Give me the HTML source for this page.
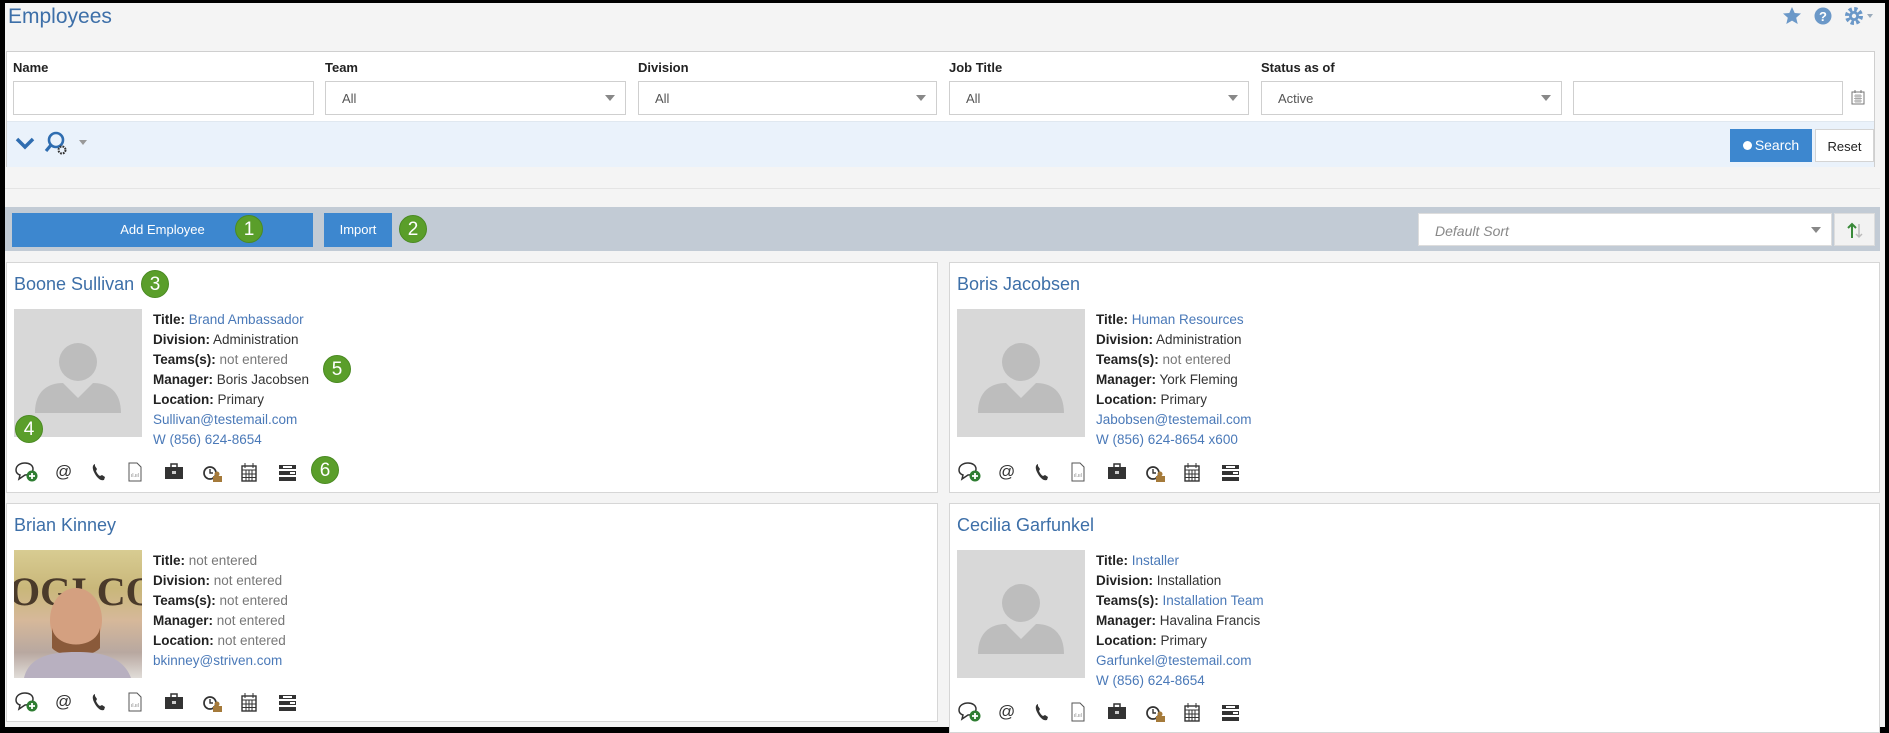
<!DOCTYPE html>
<html><head><meta charset="utf-8"><style>
*{box-sizing:border-box;margin:0;padding:0}
html,body{width:1889px;height:733px;overflow:hidden;background:#000}
#pg{position:absolute;left:5px;top:3px;width:1880px;height:724px;background:#f4f4f4;font-family:"Liberation Sans",sans-serif;color:#222}
.a{position:absolute}
.title{left:3px;top:2px;font-size:21px;color:#3d6fa8}
.fbox{left:1px;top:48px;width:1869px;height:116px;background:#fff;border:1px solid #cfcfcf}
.lbl{font-size:13px;font-weight:bold;color:#222;top:8px}
.inp{top:29px;height:34px;background:#fff;border:1px solid #cfcfcf;font-size:13px;color:#555;padding:9px 0 0 16px}
.inp .dd{position:absolute;right:10px;top:13px;border-left:5px solid transparent;border-right:5px solid transparent;border-top:6px solid #888}
.band{left:0;top:69px;width:1867px;height:46px;background:#eaf2fb;border-top:1px solid #e0e8f0}
.btn{background:#3d87cf;color:#fff;font-size:13px;text-align:center}
.badge{width:28px;height:28px;border-radius:50%;background:#5a9e2a;color:#fff;font-size:19px;text-align:center;line-height:28px;border:1px solid #4a8a22}
.card{background:#fff;border:1px solid #d6d6d6}
.nm{font-size:18px;color:#3d6fa8;left:7px;top:11px}
.ph{left:7px;top:46px;width:128px;height:128px;background:#d8d8d8;overflow:hidden}
.det{font-size:13.5px;line-height:20px;color:#333;left:146px;top:47px}
.det b{color:#222}
.bl{color:#4a79b8}
.gr{color:#777}
</style></head><body><div id="pg">
<div class="a title">Employees</div>
<svg class="a" style="left:1777px;top:3px" width="20" height="20" viewBox="0 0 20 20"><path d="M10 1l2.7 6 6.3.5-4.8 4.2 1.5 6.3L10 14.6 4.3 18l1.5-6.3L1 7.5 7.3 7z" fill="#6b98c8"/></svg>
<svg class="a" style="left:1809px;top:4px" width="18" height="18"><circle cx="9" cy="9" r="8.5" fill="#6b98c8"/><text x="9" y="14" font-size="13" font-weight="bold" fill="#fff" text-anchor="middle" font-family="Liberation Sans">?</text></svg>
<svg class="a" style="left:1839px;top:3px" width="20" height="20" viewBox="0 0 20 20"><circle cx="10" cy="10" r="6.5" fill="none" stroke="#6b98c8" stroke-width="5" stroke-dasharray="3 2.1"/><circle cx="10" cy="10" r="5" fill="#6b98c8"/><circle cx="10" cy="10" r="2.2" fill="#f4f4f4"/></svg>
<div class="a" style="left:1862px;top:11px;border-left:3px solid transparent;border-right:3px solid transparent;border-top:4px solid #9ab"></div>
<div class="a fbox">
 <div class="a lbl" style="left:6px">Name</div>
 <div class="a lbl" style="left:318px">Team</div>
 <div class="a lbl" style="left:631px">Division</div>
 <div class="a lbl" style="left:942px">Job Title</div>
 <div class="a lbl" style="left:1254px">Status as of</div>
 <div class="a inp" style="left:6px;width:301px"></div>
 <div class="a inp" style="left:318px;width:301px">All<span class="dd"></span></div>
 <div class="a inp" style="left:631px;width:299px">All<span class="dd"></span></div>
 <div class="a inp" style="left:942px;width:300px">All<span class="dd"></span></div>
 <div class="a inp" style="left:1254px;width:301px">Active<span class="dd"></span></div>
 <div class="a inp" style="left:1566px;width:270px"></div>
 <svg class="a" style="left:1844px;top:38px" width="14" height="15"><rect x="1" y="2" width="12" height="12" fill="none" stroke="#777"/><path d="M3 6h8M3 8.5h8M3 11h8M5 4v9M7 4v9M9 4v9" stroke="#999" stroke-width=".8"/><path d="M4 0v3M10 0v3" stroke="#777"/></svg>
 <div class="a band">
  <svg class="a" style="left:8px;top:14px" width="20" height="14"><path d="M2 3l8 8 8-8" fill="none" stroke="#2f6db0" stroke-width="3.5"/></svg>
  <svg class="a" style="left:37px;top:8px" width="26" height="28"><circle cx="12" cy="10" r="7" fill="none" stroke="#2f6db0" stroke-width="2.6"/><path d="M7 15l-5 6" stroke="#2f6db0" stroke-width="3.2"/><circle cx="18" cy="20" r="3.5" fill="none" stroke="#333" stroke-width="2" stroke-dasharray="1.8 1"/></svg>
  <div class="a" style="left:72px;top:18px;border-left:4px solid transparent;border-right:4px solid transparent;border-top:5px solid #999"></div>
  <div class="a btn" style="left:1723px;top:7px;width:82px;height:33px;line-height:33px;font-size:14px"><span style="display:inline-block;width:9px;height:9px;border-radius:50%;background:#fff;margin-right:3px"></span>Search</div>
  <div class="a" style="left:1808px;top:7px;width:59px;height:33px;line-height:33px;background:#fff;border:1px solid #d4d4d4;font-size:13px;text-align:center">Reset</div>
 </div>
</div>
<div class="a" style="left:0;top:185px;width:1875px;height:1px;background:#e4e4e4"></div>
<div class="a" style="left:0;top:204px;width:1875px;height:44px;background:#c2cbd5"></div>
<div class="a btn" style="left:7px;top:210px;width:301px;height:34px;line-height:34px">Add Employee</div>
<div class="a badge" style="left:230px;top:212px">1</div>
<div class="a btn" style="left:319px;top:210px;width:68px;height:34px;line-height:34px">Import</div>
<div class="a badge" style="left:394px;top:212px">2</div>
<div class="a" style="left:1413px;top:210px;width:414px;height:33px;background:#fff;border:1px solid #ddd;font-size:14px;font-style:italic;color:#888;padding:9px 0 0 16px">Default Sort<span class="a" style="right:10px;top:13px;border-left:5px solid transparent;border-right:5px solid transparent;border-top:6px solid #888"></span></div>
<div class="a" style="left:1829px;top:210px;width:41px;height:33px;background:#f2f2f2;border:1px solid #ddd">
 <svg class="a" style="left:11px;top:7px" width="18" height="18"><path d="M6 17V3M2 7l4-4 4 4" fill="none" stroke="#3a8a3a" stroke-width="2"/><path d="M13 3v13M10 13l3 3 3-3" fill="none" stroke="#bbb" stroke-width="1.5"/></svg>
</div>

<div class="a card" style="left:1px;top:259px;width:932px;height:231px">
 <div class="a nm">Boone Sullivan</div>
 <div class="a ph"><svg width="128" height="128"><circle cx="64" cy="53" r="19" fill="#bdbdbd"/><path d="M21 104c0-22 13-30 28-30l15 15 15-15c15 0 28 8 28 30z" fill="#bdbdbd"/></svg></div>
 <div class="a det"><b>Title:</b> <span class="bl">Brand Ambassador</span><br><b>Division:</b> Administration<br><b>Teams(s):</b> <span class="gr">not entered</span><br><b>Manager:</b> Boris Jacobsen<br><b>Location:</b> Primary<br><span class="bl">Sullivan@testemail.com</span><br><span class="bl">W (856) 624-8654</span></div>
</div>
<div class="a badge" style="left:136px;top:267px">3</div>
<div class="a badge" style="left:10px;top:412px">4</div>
<div class="a badge" style="left:318px;top:352px">5</div>
<div class="a badge" style="left:306px;top:453px">6</div>

<div class="a card" style="left:944px;top:259px;width:931px;height:231px">
 <div class="a nm">Boris Jacobsen</div>
 <div class="a ph"><svg width="128" height="128"><circle cx="64" cy="53" r="19" fill="#bdbdbd"/><path d="M21 104c0-22 13-30 28-30l15 15 15-15c15 0 28 8 28 30z" fill="#bdbdbd"/></svg></div>
 <div class="a det"><b>Title:</b> <span class="bl">Human Resources</span><br><b>Division:</b> Administration<br><b>Teams(s):</b> <span class="gr">not entered</span><br><b>Manager:</b> York Fleming<br><b>Location:</b> Primary<br><span class="bl">Jabobsen@testemail.com</span><br><span class="bl">W (856) 624-8654 x600</span></div>
</div>

<div class="a card" style="left:1px;top:500px;width:932px;height:219px">
 <div class="a nm">Brian Kinney</div>
 <div class="a ph" style="background:linear-gradient(180deg,#d8cc92 0%,#c9b77a 30%,#d6b89a 55%,#b8a8a0 80%,#e0dcd8 100%)"><svg width="128" height="128"><text x="-5" y="55" font-size="40" font-weight="bold" fill="#4a3a2a" font-family="Liberation Serif">OGI CO</text><ellipse cx="62" cy="70" rx="26" ry="32" fill="#d4a080"/><path d="M38 78c4 22 44 22 48 0v20c-8 10-40 10-48 0z" fill="#8a5a3a"/><path d="M10 128c5-22 28-26 52-26s47 4 55 26z" fill="#b8b0c0"/></svg></div>
 <div class="a det"><b>Title:</b> <span class="gr">not entered</span><br><b>Division:</b> <span class="gr">not entered</span><br><b>Teams(s):</b> <span class="gr">not entered</span><br><b>Manager:</b> <span class="gr">not entered</span><br><b>Location:</b> <span class="gr">not entered</span><br><span class="bl">bkinney@striven.com</span></div>
</div>

<div class="a card" style="left:944px;top:500px;width:931px;height:230px">
 <div class="a nm">Cecilia Garfunkel</div>
 <div class="a ph"><svg width="128" height="128"><circle cx="64" cy="53" r="19" fill="#bdbdbd"/><path d="M21 104c0-22 13-30 28-30l15 15 15-15c15 0 28 8 28 30z" fill="#bdbdbd"/></svg></div>
 <div class="a det"><b>Title:</b> <span class="bl">Installer</span><br><b>Division:</b> Installation<br><b>Teams(s):</b> <span class="bl">Installation Team</span><br><b>Manager:</b> Havalina Francis<br><b>Location:</b> Primary<br><span class="bl">Garfunkel@testemail.com</span><br><span class="bl">W (856) 624-8654</span></div>
</div>
</div>
<script>
var ic='<svg width="300" height="24" viewBox="0 0 300 24">'+
'<g><path d="M3 10c0-5 5-7 9-7s8 2 8 6-4 6-8 6l-6 4 1-4c-3-1-4-3-4-5z" fill="none" stroke="#333" stroke-width="1.5"/><circle cx="19" cy="16" r="5.5" fill="#2e7d32"/><path d="M19 13v6M16 16h6" stroke="#fff" stroke-width="1.8"/></g>'+
'<text x="42" y="17" font-size="17" fill="#333" font-family="Liberation Sans">@</text>'+
'<path d="M82 4c-3 1-3 5 0 10s6 7 9 6l1-3-3-2-2 1c-2-1-3-3-4-5l1-2-2-3z" fill="#333"/>'+
'<g><path d="M116 3h8l4 4v14h-12z" fill="#fff" stroke="#555"/><text x="118" y="17" font-size="5" fill="#777">ıl.ııl</text></g>'+
'<g><rect x="152" y="7" width="18" height="12" fill="#333"/><rect x="158" y="4" width="6" height="4" fill="none" stroke="#333" stroke-width="1.5"/><rect x="159" y="11" width="4" height="3" fill="#ccc"/></g>'+
'<g><circle cx="197" cy="13" r="6" fill="none" stroke="#333" stroke-width="1.7"/><path d="M197 9v4h3" stroke="#333" stroke-width="1.4" fill="none"/><circle cx="204" cy="14" r="2.5" fill="#a57a3a"/><rect x="200" y="16" width="9" height="6" fill="#a57a3a"/></g>'+
'<g><rect x="229" y="6" width="14" height="15" fill="#fff" stroke="#333" stroke-width="1.4"/><path d="M229 10h14M232 3v5M240 3v5M229 14h14M229 17.5h14M233 10v11M236 10v11M239 10v11" stroke="#333" stroke-width="1"/></g>'+
'<g fill="#333"><rect x="266" y="5" width="17" height="4"/><rect x="266" y="11" width="17" height="4"/><rect x="266" y="17" width="17" height="4"/><rect x="277" y="12" width="5" height="2" fill="#fff"/><rect x="270" y="6" width="9" height="2" fill="#fff"/></g>'+
'</svg>';
var cards=document.querySelectorAll('.card');
var tops=[197,197,186,196];
for(var i=0;i<cards.length;i++){var d=document.createElement('div');d.className='a';d.style.left='6px';d.style.top=tops[i]+'px';d.innerHTML=ic;cards[i].appendChild(d);}
</script>
</body></html>
